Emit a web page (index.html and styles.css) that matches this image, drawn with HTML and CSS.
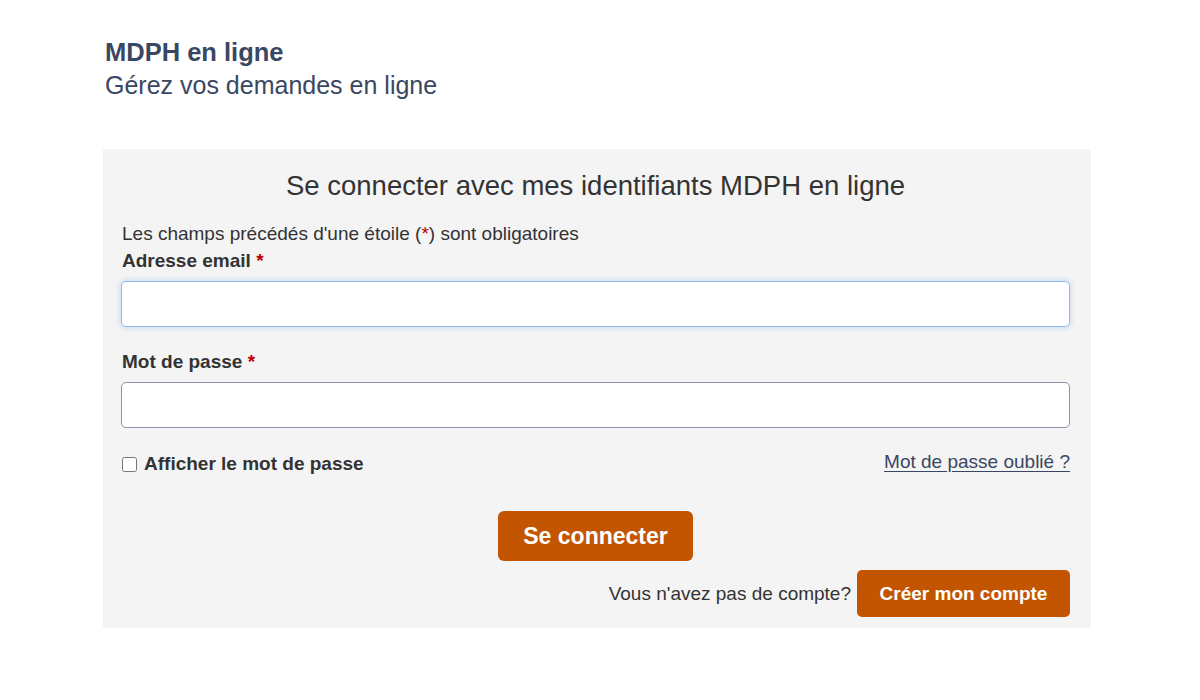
FILE: index.html
```html
<!DOCTYPE html>
<html lang="fr">
<head>
<meta charset="utf-8">
<title>MDPH en ligne</title>
<link rel="stylesheet" href="styles.css">
</head>
<body>
<div class="page">
  <header class="brand">
    <div class="brand-name">MDPH en ligne</div>
    <div class="brand-tag">Gérez vos demandes en ligne</div>
  </header>
  <main class="panel">
    <h1 class="panel-title">Se connecter avec mes identifiants MDPH en ligne</h1>
    <p class="note">Les champs précédés d'une étoile (<span class="req">*</span>) sont obligatoires</p>
    <label class="label" for="email">Adresse email <span class="req">*</span></label>
    <input class="field field-focus" id="email" type="email">
    <label class="label label-pw" for="pw">Mot de passe <span class="req">*</span></label>
    <input class="field" id="pw" type="password">
    <div class="row-opts">
      <label class="check"><input type="checkbox" class="box"> Afficher le mot de passe</label>
      <a class="forgot" href="#">Mot de passe oublié ?</a>
    </div>
    <div class="row-submit">
      <button class="btn btn-main" type="button">Se connecter</button>
    </div>
    <div class="row-create">
      <span class="no-account">Vous n'avez pas de compte?</span>
      <button class="btn btn-create" type="button">Créer mon compte</button>
    </div>
  </main>
</div>
</body>
</html>
```
FILE: styles.css
```css
html, body {
  margin: 0;
  padding: 0;
  background: #ffffff;
}
body {
  font-family: "Liberation Sans", Arial, Helvetica, sans-serif;
  color: #333333;
}
.page {
  padding: 37px 0 0 103px;
  width: 988px;
}
.brand {
  padding-left: 2px;
  color: #3a4762;
}
.brand-name {
  font-size: 25.5px;
  font-weight: 700;
  line-height: 30px;
}
.brand-tag {
  font-size: 25px;
  line-height: 30px;
  margin-top: 3px;
}
.panel {
  margin-top: 49px;
  background: #f4f4f4;
  padding: 20px 21px 11px 18px;
  display: flex;
  flex-direction: column;
}
.panel-title {
  margin: 0;
  text-align: center;
  font-size: 27.5px;
  font-weight: 400;
  line-height: 34px;
  color: #333333;
}
.note {
  margin: 19px 0 0 1px;
  font-size: 19px;
  line-height: 24px;
}
.req {
  color: #b40000;
}
.label {
  display: block;
  margin: 3px 0 0 1px;
  font-size: 19px;
  line-height: 24px;
  font-weight: 700;
}
.label-pw {
  margin-top: 23px;
}
.field {
  box-sizing: border-box;
  display: block;
  width: 100%;
  height: 46px;
  margin: 8px 0 0 0;
  border: 1px solid #8d91a3;
  border-radius: 5px;
  background: #ffffff;
  outline: none;
}
.field-focus {
  border-color: #90bce8;
  box-shadow: 0 0 4px 2px rgba(150, 190, 235, 0.35);
}
.row-opts {
  display: flex;
  justify-content: space-between;
  align-items: center;
  margin-top: 24px;
  height: 24px;
}
.check {
  display: flex;
  align-items: center;
  font-size: 19px;
  line-height: 24px;
  font-weight: 700;
  color: #333333;
  margin-left: 1px;
}
.box {
  width: 15px;
  height: 15px;
  margin: 0 7px 0 0;
}
.forgot {
  font-size: 19px;
  line-height: 24px;
  margin-top: -4px;
  color: #3a4762;
  text-decoration: underline;
  text-underline-offset: 3px;
}
.row-submit {
  display: flex;
  justify-content: center;
  margin-top: 35px;
}
.btn {
  font-family: "Liberation Sans", Arial, Helvetica, sans-serif;
  background: #c45500;
  color: #ffffff;
  border: none;
  font-weight: 700;
  cursor: pointer;
  padding: 0;
}
.btn-main {
  width: 195px;
  height: 50px;
  border-radius: 6px;
  font-size: 23px;
}
.row-create {
  display: flex;
  justify-content: flex-end;
  align-items: center;
  gap: 6px;
  margin-top: 9px;
}
.no-account {
  font-size: 19px;
  color: #333333;
}
.btn-create {
  width: 213px;
  height: 47px;
  border-radius: 5px;
  font-size: 19px;
}
```
